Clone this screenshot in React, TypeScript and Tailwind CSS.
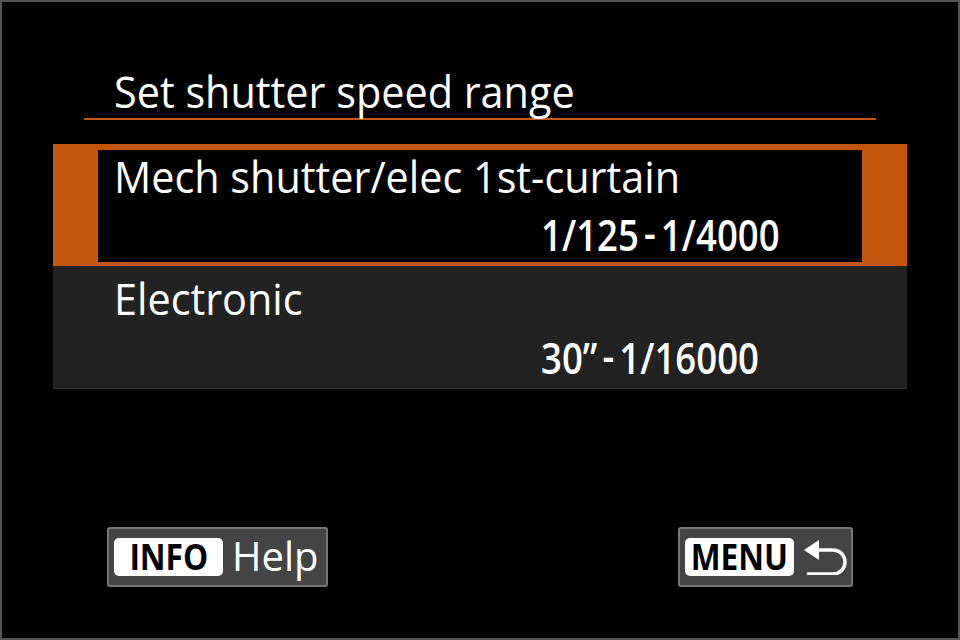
import React from "react";

const font = { fontFamily: '"Open Sans", "Noto Sans", sans-serif' };

const options = [
  { label: "Mech shutter/elec 1st-curtain", from: "1/125", to: "1/4000", selected: true },
  { label: "Electronic", from: "30\u201D", to: "1/16000", selected: false },
];

// condensed text like the camera's menu font
const Narrow = ({ children, className = "" }: { children: React.ReactNode; className?: string }) => (
  <span className={`inline-block origin-left whitespace-nowrap ${className}`}>{children}</span>
);

const Range = ({ from, to }: { from: string; to: string }) => (
  <Narrow className="scale-x-[0.85] text-[43px] leading-[48px] font-semibold">
    {from}
    <span className="inline-block mx-[6px] translate-y-[-2px]">-</span>
    {to}
  </Narrow>
);

const ReturnIcon = () => (
  <svg width="46" height="36" viewBox="0 0 46 36" fill="none">
    <path d="M1 11 L16 1 L16 21 Z" fill="white" />
    <path d="M14 11 H30 A12 12 0 0 1 30 35 H4" stroke="white" strokeWidth="3.5" fill="none" />
  </svg>
);

export default function App() {
  return (
    <div
      className="w-[960px] h-[640px] bg-black border-2 border-[#555] flex flex-col text-white overflow-hidden"
      style={font}
    >
      {/* title */}
      <div className="mt-[64px] mx-[82px] pl-[30px] h-[54px] border-b-2 border-[#c8581a] text-[44px] leading-[50px]">
        <Narrow className="scale-x-[0.94]">Set shutter speed range</Narrow>
      </div>

      {/* options */}
      <div className="mt-[24px] mx-[51px] flex flex-col">
        {options.map((o) =>
          o.selected ? (
            <div key={o.label} className="h-[122px] bg-[#c4560e] pt-[6px] pb-[4px] px-[45px]">
              <div className="h-full bg-black pl-[16px] flex flex-col">
                <div className="text-[44px] leading-[50px] mt-[1px]">
                  <Narrow className="scale-x-[0.94]">{o.label}</Narrow>
                </div>
                <div className="pl-[427px] mt-[10px]">
                  <Range from={o.from} to={o.to} />
                </div>
              </div>
            </div>
          ) : (
            <div key={o.label} className="h-[123px] bg-[#222] border-b border-[#333] pl-[61px] flex flex-col">
              <div className="text-[44px] leading-[50px] mt-[7px]">
                <Narrow className="scale-x-[0.94]">{o.label}</Narrow>
              </div>
              <div className="pl-[427px] mt-[11px]">
                <Range from={o.from} to={o.to} />
              </div>
            </div>
          )
        )}
      </div>

      {/* footer buttons */}
      <div className="mt-auto mb-[51px] mx-[105px] flex justify-between items-center">
        <div className="h-[60px] w-[221px] bg-[#444] border-2 border-[#777] rounded-[3px] flex items-center pl-[5px] gap-[9px]">
          <div className="h-[38px] w-[109px] bg-white rounded-[5px] flex items-center justify-center text-black font-bold text-[36px] leading-none">
            <span className="inline-block scale-x-[0.88]">INFO</span>
          </div>
          <span className="text-[40px] leading-none -mt-[3px]">Help</span>
        </div>
        <div className="h-[60px] w-[175px] bg-[#444] border-2 border-[#777] rounded-[3px] flex items-center pl-[5px] gap-[9px]">
          <div className="h-[38px] w-[109px] bg-white rounded-[5px] flex items-center justify-center text-black font-bold text-[36px] leading-none">
            <span className="inline-block scale-x-[0.88]">MENU</span>
          </div>
          <ReturnIcon />
        </div>
      </div>
    </div>
  );
}
